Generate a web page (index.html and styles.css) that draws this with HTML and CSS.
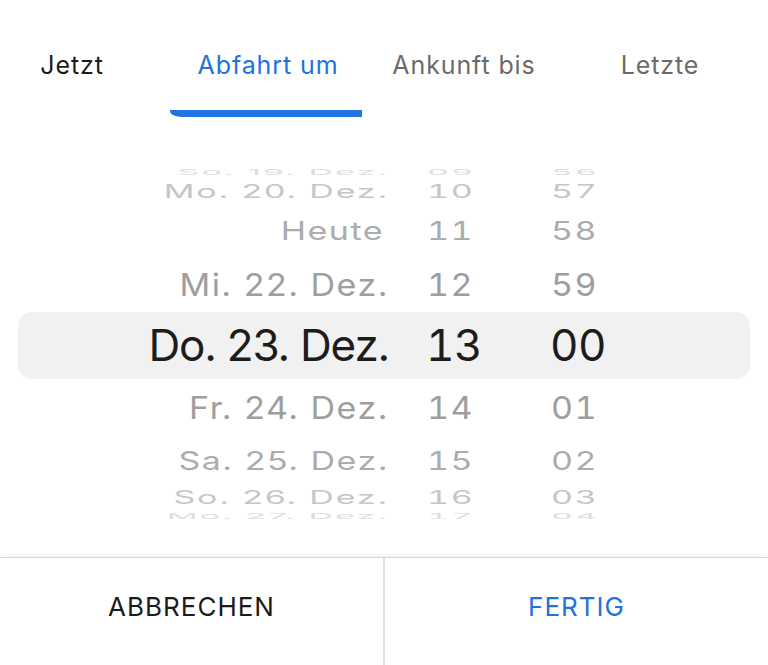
FILE: index.html
```html
<!DOCTYPE html>
<html lang="de">
<head>
<meta charset="utf-8">
<title>Abfahrt wählen</title>
<link rel="stylesheet" href="styles.css">
</head>
<body>
<div class="screen">
  <nav class="tabs">
    <div class="tab tab-dark"><span class="tab-label">Jetzt</span><span class="tab-bar"></span></div>
    <div class="tab tab-active"><span class="tab-label">Abfahrt um</span><span class="tab-bar"></span></div>
    <div class="tab"><span class="tab-label">Ankunft bis</span><span class="tab-bar"></span></div>
    <div class="tab"><span class="tab-label">Letzte</span><span class="tab-bar"></span></div>
  </nav>

  <div class="wheel">
    <div class="row r4 top"><span class="c-date">So. 19. Dez.</span><span class="c-hour">09</span><span class="c-min">56</span></div>
    <div class="row r3 top"><span class="c-date">Mo. 20. Dez.</span><span class="c-hour">10</span><span class="c-min">57</span></div>
    <div class="row r2 top"><span class="c-date">Heute</span><span class="c-hour">11</span><span class="c-min">58</span></div>
    <div class="row r1 top"><span class="c-date">Mi. 22. Dez.</span><span class="c-hour">12</span><span class="c-min">59</span></div>
    <div class="row r0"><span class="c-date">Do. 23. Dez.</span><span class="c-hour">13</span><span class="c-min">00</span></div>
    <div class="row r1 bottom"><span class="c-date">Fr. 24. Dez.</span><span class="c-hour">14</span><span class="c-min">01</span></div>
    <div class="row r2 bottom"><span class="c-date">Sa. 25. Dez.</span><span class="c-hour">15</span><span class="c-min">02</span></div>
    <div class="row r3 bottom"><span class="c-date">So. 26. Dez.</span><span class="c-hour">16</span><span class="c-min">03</span></div>
    <div class="row r4 bottom"><span class="c-date">Mo. 27. Dez.</span><span class="c-hour">17</span><span class="c-min">04</span></div>
  </div>

  <footer class="actions">
    <button class="action action-cancel">ABBRECHEN</button>
    <button class="action action-done">FERTIG</button>
  </footer>
</div>
</body>
</html>
```
FILE: styles.css
```css
* { box-sizing: border-box; }

html, body {
  margin: 0;
  padding: 0;
  background: #ffffff;
}

body {
  font-family: Inter, "Liberation Sans", sans-serif;
  color: #1c1c1c;
}

.screen {
  width: 768px;
  height: 665px;
  overflow: hidden;
  display: flex;
  flex-direction: column;
}

/* Tabs */
.tabs {
  display: flex;
  height: 117px;
  margin-left: -26px;
  flex-shrink: 0;
}

.tab {
  width: 196px;
  flex-shrink: 0;
  display: flex;
  flex-direction: column;
  align-items: center;
  padding-top: 50px;
}

.tab-label {
  font-size: 25px;
  line-height: 30px;
  letter-spacing: 0.9px;
  color: #6b6b6b;
  white-space: nowrap;
}

.tab-dark .tab-label { color: #1c1c1c; }
.tab-active .tab-label { color: #2272de; }

.tab-bar {
  align-self: flex-start;
  width: 192px;
  height: 7px;
  margin-top: 30px;
}

.tab-active .tab-bar {
  background: #2173df;
  border-bottom-left-radius: 12px 6px;
}

/* Wheel */
.wheel {
  margin: 47px 18px 0;
  display: flex;
  flex-direction: column;
  flex-shrink: 0;
}

.row {
  display: grid;
  grid-template-columns: 371px 126px 1fr;
  font-size: 34px;
  letter-spacing: 1.5px;
  white-space: nowrap;
}

.c-date { text-align: right; }
.c-hour,
.c-min { font-feature-settings: "tnum" 1; }
.c-hour { padding-left: 38px; }
.c-min { padding-left: 36px; }

.r0 {
  height: 67px;
  line-height: 67px;
  font-size: 44px;
  letter-spacing: -1.2px;
  color: #1c1c1c;
  background: #f1f1f1;
  border-radius: 14px;
}

.r0 .c-hour { padding-left: 37px; letter-spacing: -0.5px; }
.r0 .c-min { padding-left: 35px; letter-spacing: -0.5px; }

.r1 { color: #9e9e9e; transform: scaleY(0.92); }
.r1.top { height: 54px; line-height: 54px; }
.r1.bottom { height: 58px; line-height: 58px; }

.r2 { color: #acacac; transform: scaleY(0.76); }
.r2.top { height: 54px; line-height: 54px; }
.r2.bottom { height: 48px; line-height: 48px; }
.r2.top .c-date { padding-right: 5px; }

.r3 { color: #c6c6c6; transform: scaleY(0.54); letter-spacing: 1.8px; }
.r3.top { height: 24px; line-height: 24px; }
.r3.bottom { height: 26px; line-height: 26px; }

.r4 { color: #dedede; transform: scaleY(0.24); letter-spacing: 2px; }
.r4.top { height: 16px; line-height: 16px; }
.r4.bottom { height: 10px; line-height: 10px; }

/* Actions */
.actions {
  margin-top: auto;
  height: 108px;
  display: flex;
  border-top: 1px solid #d9d9d9;
  box-shadow: 0 -2px 4px rgba(0, 0, 0, 0.06);
  flex-shrink: 0;
}

.action {
  appearance: none;
  border: none;
  background: #ffffff;
  margin: 0;
  padding: 0 0 9px;
  display: flex;
  align-items: center;
  justify-content: center;
  font-family: Inter, "Liberation Sans", sans-serif;
  font-size: 26px;
  line-height: 30px;
  letter-spacing: 1px;
}

.action-cancel {
  width: 385px;
  color: #1c1c1c;
  border-right: 2px solid #e2e2e2;
}

.action-done {
  flex: 1;
  color: #2272de;
}
```
